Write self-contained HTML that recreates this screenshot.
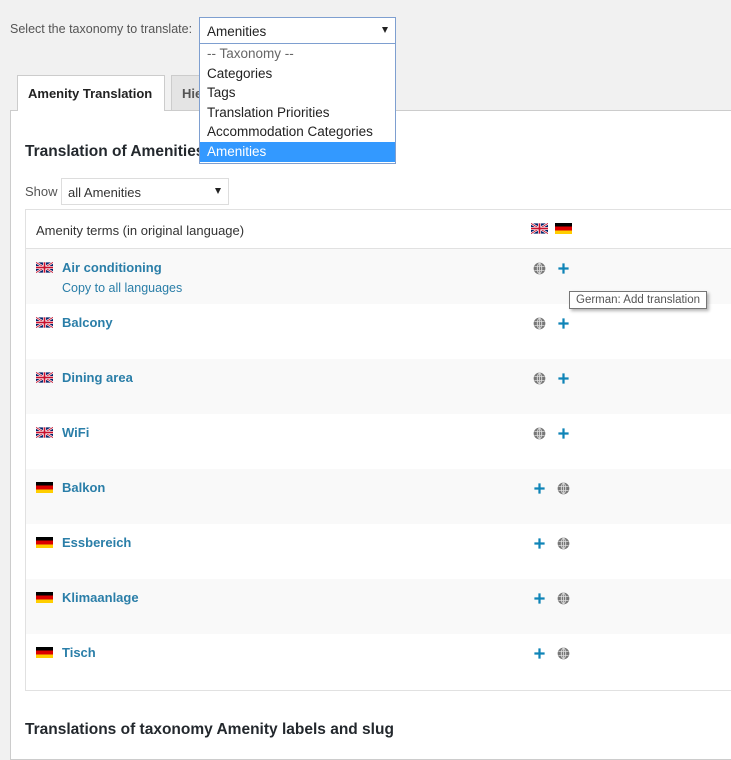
<!DOCTYPE html>
<html><head><meta charset="utf-8"><style>
*{margin:0;padding:0;box-sizing:border-box}
body{width:731px;height:748px;overflow:hidden;background:#f1f1f1;font-family:"Liberation Sans",sans-serif;color:#333;position:relative}
.a{position:absolute;white-space:nowrap}
.lbl{left:10px;top:22px;font-size:12.5px;color:#555}
.sel{left:199px;top:17px;width:197px;height:27px;background:#fff;border:1px solid #7e9fd0;font-size:13.5px;padding:6px 7px;color:#222}
.arr{position:absolute;right:7px;top:9px;width:0;height:0;border-left:3.5px solid transparent;border-right:3.5px solid transparent;border-top:6px solid #222}
.list{left:199px;top:44px;width:197px;height:120px;background:#fff;border:1px solid #7e9fd0;border-top:none;z-index:5;font-size:13.5px;color:#222}
.list div{height:19.6px;line-height:19.6px;padding-left:7px}
.list .hl{background:#3399ff;color:#fff}
.tab1{left:17px;top:75px;width:148px;height:36px;background:#fff;border:1px solid #ccc;border-bottom:none;font-size:13px;font-weight:bold;padding:10px 10px;color:#222;z-index:2}
.tab2{left:171px;top:75px;width:60px;height:35px;background:#e4e4e4;border:1px solid #ccc;border-bottom:none;font-size:13px;font-weight:bold;padding:10px 10px;color:#555;overflow:hidden}
.panel{left:10px;top:110px;width:730px;height:650px;background:#fff;border:1px solid #ccc}
h2{position:absolute;font-size:15.5px;font-weight:bold;color:#23282d;white-space:nowrap}
.show{left:25px;top:184px;font-size:13px;color:#555}
.sel2{left:61px;top:178px;width:168px;height:27px;background:#fff;border:1px solid #ddd;font-size:13px;padding:6px 6px;color:#333}
.tbl{left:25px;top:209px;width:720px;height:482px;border:1px solid #e1e1e1;background:#fff}
.hdr{left:0;top:0;width:100%;height:39px;border-bottom:1px solid #e1e1e1;font-size:13px;padding:13px 10px;color:#333}
.row{position:absolute;left:0;width:100%;height:55px}
.g{background:#f9f9f9}
.name{position:absolute;left:36px;top:11px;font-size:13px;font-weight:bold;color:#2a7ea8}
.copy{position:absolute;left:36px;top:32px;font-size:12.5px;color:#2a7ea8}
.fl{position:absolute;left:10px;top:13px;width:17px;height:11px}
.de{background:linear-gradient(#000 0 33%,#d00 33% 66%,#ffce00 66%)}
.ic{position:absolute;top:13px}
.tip{left:569px;top:291px;border:1px solid #767676;background:#fff;font-size:11.5px;color:#555;padding:2px 6px;box-shadow:2px 2px 3px rgba(0,0,0,.3);z-index:6}
</style></head><body>
<svg width="0" height="0" style="position:absolute"><defs>
<symbol id="uk" viewBox="0 0 60 36"><rect width="60" height="36" fill="#012169"/><path d="M0 0L60 36M60 0L0 36" stroke="#fff" stroke-width="8"/><path d="M0 0L60 36M60 0L0 36" stroke="#c8102e" stroke-width="3"/><path d="M30 0V36M0 18H60" stroke="#fff" stroke-width="11"/><path d="M30 0V36M0 18H60" stroke="#c8102e" stroke-width="6"/></symbol>
<symbol id="gl" viewBox="0 0 14 14"><circle cx="7" cy="7" r="6.3" fill="#777"/><ellipse cx="7" cy="7" rx="2.4" ry="5.5" fill="none" stroke="#ddd" stroke-width="1"/><path d="M1.5 5H12.5M1.5 9H12.5M7 1V13" stroke="#ddd" stroke-width=".9"/></symbol>
<symbol id="pl" viewBox="0 0 14 14"><path d="M7 1.5V12.5M1.5 7H12.5" stroke="#0f84b7" stroke-width="2.4"/></symbol>
</defs></svg>
<div class="a lbl">Select the taxonomy to translate:</div>
<div class="a sel">Amenities<span class="arr"></span></div>
<div class="a list"><div style="color:#666">-- Taxonomy --</div><div>Categories</div><div>Tags</div><div>Translation Priorities</div><div>Accommodation Categories</div><div class="hl">Amenities</div></div>
<div class="a panel"></div>
<div class="a tab2">Hie</div>
<div class="a tab1">Amenity Translation</div>
<h2 style="left:25px;top:143px">Translation of Amenities</h2>
<div class="a show">Show</div>
<div class="a sel2">all Amenities<span class="arr" style="top:9px"></span></div>
<div class="a tbl">
 <div class="a hdr">Amenity terms (in original language)
  <svg class="a" style="left:505px;top:13px" width="17" height="11"><use href="#uk"/></svg>
  <div class="a de" style="left:529px;top:13px;width:17px;height:11px"></div>
 </div>
 <div class="row g" style="top:39px"><svg class="fl"><use href="#uk"/></svg><div class="name">Air conditioning</div><div class="copy">Copy to all languages</div><svg class="ic" style="left:507px" width="13" height="13"><use href="#gl"/></svg><svg class="ic" style="left:531px" width="13" height="13"><use href="#pl"/></svg></div>
 <div class="row" style="top:94px"><svg class="fl"><use href="#uk"/></svg><div class="name">Balcony</div><svg class="ic" style="left:507px" width="13" height="13"><use href="#gl"/></svg><svg class="ic" style="left:531px" width="13" height="13"><use href="#pl"/></svg></div>
 <div class="row g" style="top:149px"><svg class="fl"><use href="#uk"/></svg><div class="name">Dining area</div><svg class="ic" style="left:507px" width="13" height="13"><use href="#gl"/></svg><svg class="ic" style="left:531px" width="13" height="13"><use href="#pl"/></svg></div>
 <div class="row" style="top:204px"><svg class="fl"><use href="#uk"/></svg><div class="name">WiFi</div><svg class="ic" style="left:507px" width="13" height="13"><use href="#gl"/></svg><svg class="ic" style="left:531px" width="13" height="13"><use href="#pl"/></svg></div>
 <div class="row g" style="top:259px"><div class="fl de"></div><div class="name">Balkon</div><svg class="ic" style="left:507px" width="13" height="13"><use href="#pl"/></svg><svg class="ic" style="left:531px" width="13" height="13"><use href="#gl"/></svg></div>
 <div class="row" style="top:314px"><div class="fl de"></div><div class="name">Essbereich</div><svg class="ic" style="left:507px" width="13" height="13"><use href="#pl"/></svg><svg class="ic" style="left:531px" width="13" height="13"><use href="#gl"/></svg></div>
 <div class="row g" style="top:369px"><div class="fl de"></div><div class="name">Klimaanlage</div><svg class="ic" style="left:507px" width="13" height="13"><use href="#pl"/></svg><svg class="ic" style="left:531px" width="13" height="13"><use href="#gl"/></svg></div>
 <div class="row" style="top:424px"><div class="fl de"></div><div class="name">Tisch</div><svg class="ic" style="left:507px" width="13" height="13"><use href="#pl"/></svg><svg class="ic" style="left:531px" width="13" height="13"><use href="#gl"/></svg></div>
</div>
<div class="a tip">German: Add translation</div>
<h2 style="left:25px;top:721px">Translations of taxonomy Amenity labels and slug</h2>
</body></html>
